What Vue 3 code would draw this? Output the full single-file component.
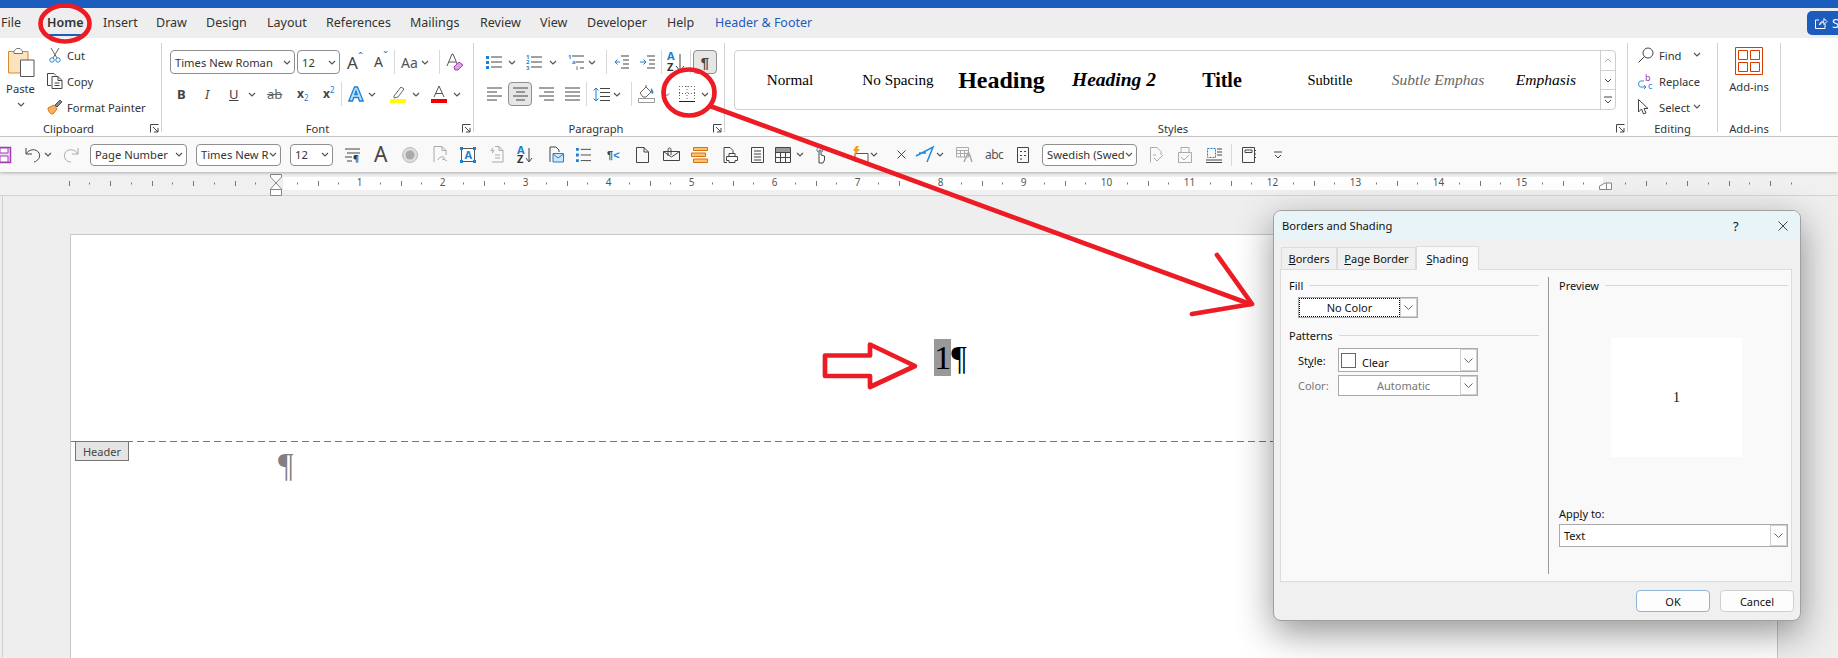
<template>
  <div class="word">
    <div class="titlebar"></div>

    <div class="tabs">
      <div class="tab-list">
        <span v-for="t in tabs" :key="t" class="tab" :class="{ on: t === 'Home', ctx: t === 'Header & Footer' }">{{ t }}</span>
      </div>
      <div class="share">
        <svg width="14" height="14" viewBox="0 0 14 14" class="w"><path d="M5 4H1.500V12.500H11V8M5.500 9C6 6 8 5 10 5V2.500L13 5.500L10 8.500V6.500C8 6.500 6.500 7 5.500 9Z"/></svg>
        <span>S</span>
      </div>
    </div>

    <div class="ribbon">
      <!-- Clipboard -->
      <section class="group g-clip">
        <div class="clip-body">
          <div class="paste">
            <svg width="28" height="31" viewBox="0 0 28 31">
              <path d="M1.500 4.500H21V26H1.500Z" fill="#fbe3bd" stroke="#d98a2b"/>
              <path d="M7 4.500C7 3 9 3 9.500 1.500H13C13.500 3 15.500 3 15.500 4.500V6.500H7Z" fill="#fff" stroke="#777"/>
              <path d="M13.500 13H27V29.500H13.500Z" fill="#fff" stroke="#555"/>
            </svg>
            <span>Paste</span>
            <svg class="chev" width="8" height="5" viewBox="0 0 8 5"><path d="M1 1L4 4L7 1"/></svg>
          </div>
          <div class="clip-list">
            <div class="clip-row">
              <svg width="16" height="16" viewBox="0 0 16 16">
                <path d="M4 1L10 11M12 1L6 11" fill="none" stroke="#666"/>
                <circle cx="5" cy="13" r="2.200" fill="none" stroke="#2b88d8"/><circle cx="11" cy="13" r="2.200" fill="none" stroke="#2b88d8"/>
              </svg>
              <span>Cut</span>
            </div>
            <div class="clip-row">
              <svg width="16" height="16" viewBox="0 0 16 16" class="k">
                <path d="M4 12.500H0.500V0.500H7L9 2.500"/><path d="M5 3.500H11L15 7.500V15.500H5ZM11 3.500V7.500H15M7.500 10H12.500M7.500 12.500H12.500"/>
              </svg>
              <span>Copy</span>
            </div>
            <div class="clip-row">
              <svg width="16" height="16" viewBox="0 0 16 16">
                <path d="M1 9L7 6L10 10L6 15C3 15 1 12 1 9Z" fill="#f7b267" stroke="#d9730d"/>
                <path d="M8 6L13 1L15 3L10 8Z" fill="#888" stroke="#555"/>
              </svg>
              <span>Format Painter</span>
            </div>
          </div>
        </div>
        <footer class="label pad-clip">Clipboard<i class="launch"><svg width="9" height="9" viewBox="0 0 9 9" class="k"><path d="M0.500 8.500V0.500H8.500M3 3L8 8M8 4V8H4"/></svg></i></footer>
      </section>

      <!-- Font -->
      <section class="group g-font">
        <div class="rows">
          <div class="row font-1">
            <span class="combo c-font">Times New Roman<svg class="chev" width="8" height="5" viewBox="0 0 8 5"><path d="M1 1L4 4L7 1"/></svg></span>
            <span class="combo c-size">12<svg class="chev" width="8" height="5" viewBox="0 0 8 5"><path d="M1 1L4 4L7 1"/></svg></span>
            <span class="bigA">A<sup class="blue">ˆ</sup></span>
            <span class="bigA small">A<sup class="blue">ˇ</sup></span>
            <i class="sep"></i>
            <span class="aa">Aa</span>
            <svg class="chev" width="8" height="5" viewBox="0 0 8 5"><path d="M1 1L4 4L7 1"/></svg>
            <i class="sep"></i>
            <svg width="18" height="18" viewBox="0 0 18 18">
              <path d="M1 13L6 1H7L12 13M3 9H10" fill="none" stroke="#555"/>
              <path d="M8 14L13 9L17 12L12 17H9Z" fill="#d9a3e3" stroke="#a23cb5"/>
            </svg>
          </div>
          <div class="row font-2">
            <b class="fx">B</b>
            <i class="fx serif-i">I</i>
            <u class="fx">U</u>
            <svg class="chev" width="8" height="5" viewBox="0 0 8 5"><path d="M1 1L4 4L7 1"/></svg>
            <s class="fx ab">ab</s>
            <span class="fx sub">x<sub>2</sub></span>
            <span class="fx sub">x<sup>2</sup></span>
            <i class="sep"></i>
            <svg width="16" height="16" viewBox="0 0 16 16">
              <path d="M0.800 15L6.500 1H9.500L15.200 15H11.500L10.300 11.500H5.700L4.500 15ZM6.800 8.500H9.200L8 5Z" fill="#bfe0f7" stroke="#1e7fd0" stroke-width="1.300"/>
            </svg>
            <svg class="chev" width="8" height="5" viewBox="0 0 8 5"><path d="M1 1L4 4L7 1"/></svg>
            <svg width="16" height="18" viewBox="0 0 16 18">
              <path d="M4 11L11 2L14 4L8 12L4 13Z" fill="none" stroke="#666"/>
              <path d="M0 14H16V18H0Z" fill="#ffff00"/>
            </svg>
            <svg class="chev" width="8" height="5" viewBox="0 0 8 5"><path d="M1 1L4 4L7 1"/></svg>
            <svg width="16" height="18" viewBox="0 0 16 18">
              <path d="M3 12L8 1L13 12M5 8.500H11" fill="none" stroke="#555"/>
              <path d="M0 14H16V18H0Z" fill="#f00000"/>
            </svg>
            <svg class="chev" width="8" height="5" viewBox="0 0 8 5"><path d="M1 1L4 4L7 1"/></svg>
          </div>
        </div>
        <footer class="label">Font<i class="launch"><svg width="9" height="9" viewBox="0 0 9 9" class="k"><path d="M0.500 8.500V0.500H8.500M3 3L8 8M8 4V8H4"/></svg></i></footer>
      </section>

      <!-- Paragraph -->
      <section class="group g-para">
        <div class="rows">
          <div class="row para-1">
            <svg width="16" height="16" viewBox="0 0 16 16" class="k"><path d="M0 2H3V5H0ZM0 7H3V10H0ZM0 12H3V15H0Z" style="fill:#1e7fd0;stroke:none"/><path d="M5 3H16M5 8H16M5 13H16"/></svg>
            <svg class="chev" width="8" height="5" viewBox="0 0 8 5"><path d="M1 1L4 4L7 1"/></svg>
            <svg width="16" height="16" viewBox="0 0 16 16" class="k"><path d="M5 3H16M5 8H16M5 13H16"/><text x="0" y="5" class="num">1</text><text x="0" y="10" class="num">2</text><text x="0" y="15.500" class="num">3</text></svg>
            <svg class="chev" width="8" height="5" viewBox="0 0 8 5"><path d="M1 1L4 4L7 1"/></svg>
            <svg width="16" height="16" viewBox="0 0 16 16" class="k"><path d="M4 2H16M8 8H16M12 14H16"/><text x="0" y="5" class="num">1</text><text x="4" y="10" class="num">a</text><text x="8" y="15.500" class="num">i</text></svg>
            <svg class="chev" width="8" height="5" viewBox="0 0 8 5"><path d="M1 1L4 4L7 1"/></svg>
            <i class="sep"></i>
            <svg width="15" height="14" viewBox="0 0 15 14" class="k"><path d="M7 1H15M9 5H15M9 9H15M7 13H15"/><path d="M6 7H1M3.500 4.500L1 7L3.500 9.500" style="stroke:#1e7fd0"/></svg>
            <svg width="15" height="14" viewBox="0 0 15 14" class="k"><path d="M7 1H15M9 5H15M9 9H15M7 13H15"/><path d="M0 7H6M3.500 4.500L6 7L3.500 9.500" style="stroke:#1e7fd0"/></svg>
            <i class="sep"></i>
            <svg width="18" height="22" viewBox="0 0 18 22">
              <text x="0" y="9" class="az blue-t">A</text><text x="0" y="20" class="az">Z</text>
              <path d="M13 3V19M9 15L13 20L17 15" fill="none" stroke="#444"/>
            </svg>
            <i class="sep"></i>
            <span class="toggle pil">¶</span>
          </div>
          <div class="row para-2">
            <svg width="15" height="14" viewBox="0 0 15 14" class="k"><path d="M0 1H15M0 5H10M0 9H15M0 13H10"/></svg>
            <span class="toggle"><svg width="15" height="14" viewBox="0 0 15 14" class="k"><path d="M0 1H15M3 5H12M0 9H15M3 13H12"/></svg></span>
            <svg width="15" height="14" viewBox="0 0 15 14" class="k"><path d="M0 1H15M5 5H15M0 9H15M5 13H15"/></svg>
            <svg width="15" height="14" viewBox="0 0 15 14" class="k"><path d="M0 1H15M0 5H15M0 9H15M0 13H15"/></svg>
            <i class="sep"></i>
            <svg width="17" height="15" viewBox="0 0 17 15" class="k"><path d="M7 1.500H17M7 5.500H17M7 9.500H17M7 13.500H17"/><path d="M3 1V14M0.500 3.500L3 1L5.500 3.500M0.500 11.500L3 14L5.500 11.500" style="stroke:#1e7fd0"/></svg>
            <svg class="chev" width="8" height="5" viewBox="0 0 8 5"><path d="M1 1L4 4L7 1"/></svg>
            <i class="sep"></i>
            <svg width="17" height="20" viewBox="0 0 17 20">
              <path d="M2 9L8 3L13 8L8 13H5ZM8 3V1" fill="none" stroke="#666"/>
              <path d="M13 4C15 6 16 8 15 10C13.500 10 12.500 8 13 4Z" fill="#2b88d8"/>
              <path d="M0.500 14.500H16.500V18.500H0.500Z" fill="#fff" stroke="#999"/>
            </svg>
            <svg class="chev" width="6" height="5" viewBox="0 0 8 5"><path d="M1 1L4 4L7 1"/></svg>
            <svg width="16" height="16" viewBox="0 0 16 16">
              <path d="M0.500 0V14M8 0V14M15.500 0V14M0 0.500H16M0 7.500H16" fill="none" stroke="#666" stroke-dasharray="1 2"/>
              <path d="M0 15.500H16" stroke="#222"/>
            </svg>
            <svg class="chev" width="8" height="5" viewBox="0 0 8 5"><path d="M1 1L4 4L7 1"/></svg>
          </div>
        </div>
        <footer class="label pad-6">Paragraph<i class="launch"><svg width="9" height="9" viewBox="0 0 9 9" class="k"><path d="M0.500 8.500V0.500H8.500M3 3L8 8M8 4V8H4"/></svg></i></footer>
      </section>

      <!-- Styles -->
      <section class="group g-styles">
        <div class="gallery">
          <div class="gallery-items">
            <span v-for="s in styles" :key="s.name" class="gal" :class="s.cls">{{ s.name }}</span>
          </div>
          <div class="gal-btns">
            <span><svg width="8" height="5" viewBox="0 0 8 5" class="k faint"><path d="M1 4L4 1L7 4"/></svg></span>
            <span><svg width="8" height="5" viewBox="0 0 8 5" class="k"><path d="M1 1L4 4L7 1"/></svg></span>
            <span><svg width="8" height="8" viewBox="0 0 8 8" class="k"><path d="M0 1H8M1 4L4 7L7 4"/></svg></span>
          </div>
        </div>
        <footer class="label pad-6">Styles<i class="launch"><svg width="9" height="9" viewBox="0 0 9 9" class="k"><path d="M0.500 8.500V0.500H8.500M3 3L8 8M8 4V8H4"/></svg></i></footer>
      </section>

      <!-- Editing -->
      <section class="group g-edit">
        <div class="edit-list">
          <div class="edit-row">
            <svg width="16" height="16" viewBox="0 0 16 16" class="k"><circle cx="10" cy="6" r="5"/><path d="M6.500 9.500L0.500 15.500"/></svg>
            <span>Find</span>
            <svg class="chev f" width="8" height="5" viewBox="0 0 8 5"><path d="M1 1L4 4L7 1"/></svg>
          </div>
          <div class="edit-row">
            <svg width="16" height="17" viewBox="0 0 16 17"><text x="7" y="8" class="rep pur">b</text><text x="10" y="16" class="rep bl">c</text><path d="M6 8H2.500C0 8 0 14 2.500 14H8M6 12L8 14L6 16" fill="none" stroke="#2b88d8"/></svg>
            <span>Replace</span>
          </div>
          <div class="edit-row">
            <svg width="11" height="16" viewBox="0 0 11 16" class="k"><path d="M0.500 0.500V13L3.500 10L5.500 15L8 14L6 9.500H10Z"/></svg>
            <span>Select</span>
            <svg class="chev f" width="8" height="5" viewBox="0 0 8 5"><path d="M1 1L4 4L7 1"/></svg>
          </div>
        </div>
        <footer class="label">Editing</footer>
      </section>

      <!-- Add-ins -->
      <section class="group g-add">
        <div class="addins">
          <svg width="28" height="28" viewBox="0 0 28 28" fill="none" stroke="#d83b01">
            <path d="M0.500 0.500H27.500V27.500H0.500Z"/>
            <path d="M3.500 3.500H12.500V12.500H3.500ZM15.500 3.500H24.500V12.500H15.500ZM3.500 15.500H12.500V24.500H3.500ZM15.500 15.500H24.500V24.500H15.500Z"/>
          </svg>
          <span>Add-ins</span>
        </div>
        <footer class="label">Add-ins</footer>
      </section>
    </div>

    <!-- Quick access -->
    <div class="qat">
      <svg width="11" height="16" viewBox="0 0 11 16"><path d="M-5 0.500H10.500V15.500H-5Z" fill="#f3d9f7" stroke="#a23cb5" stroke-width="1.500"/><path d="M0 1H8V6H0ZM0 9H8V15H0Z" fill="#fff" stroke="#a23cb5"/></svg>
      <svg width="16" height="16" viewBox="0 0 16 16" class="k"><path d="M1 1V7H7M1 7C4 2 11 1 14 6C16 10 13 14 9 15"/></svg>
      <svg class="chev" width="8" height="5" viewBox="0 0 8 5"><path d="M1 1L4 4L7 1"/></svg>
      <svg width="16" height="16" viewBox="0 0 16 16" class="k faint"><path d="M15 1V7H9M15 7C12 2 5 1 2 6C0 10 3 15 8 15"/></svg>
      <span class="combo c-qa">Page Number<svg class="chev" width="8" height="5" viewBox="0 0 8 5"><path d="M1 1L4 4L7 1"/></svg></span>
      <span class="combo c-qb">Times New R<svg class="chev" width="8" height="5" viewBox="0 0 8 5"><path d="M1 1L4 4L7 1"/></svg></span>
      <span class="combo c-qc">12<svg class="chev" width="8" height="5" viewBox="0 0 8 5"><path d="M1 1L4 4L7 1"/></svg></span>
      <svg width="16" height="16" viewBox="0 0 16 16" class="k"><path d="M1 2H16M3 6H16M1 10H8M3 14H8"/><text x="9" y="15" class="az small-t">¶</text></svg>
      <span class="qa-big">A</span>
      <svg width="16" height="16" viewBox="0 0 16 16"><circle cx="8" cy="8" r="7.500" fill="#ddd" stroke="#bbb"/><circle cx="8" cy="8" r="4.500" fill="#aaa"/></svg>
      <svg width="15" height="17" viewBox="0 0 15 17" class="k faint"><path d="M1 16V0.500H9L13 4.500V9M9 0.500V4.500H13M5 14C6 10 13 10 11 13C9 15 8 11 14 15"/></svg>
      <svg width="16" height="16" viewBox="0 0 16 16"><path d="M1.500 1.500H14.500V14.500H1.500Z" fill="#fff" stroke="#555"/><path d="M0 0H3V3H0ZM13 0H16V3H13ZM0 13H3V16H0ZM13 13H16V16H13Z" fill="#1e7fd0"/><text x="4.500" y="12" class="az blue-t">A</text></svg>
      <svg width="15" height="17" viewBox="0 0 15 17" class="k faint"><path d="M3 16H14V4.500L10 0.500H6M10 0.500V4.500H14M6 9H11M6 12H11"/><path d="M1 5L4 1V4H6L3 8V5Z" style="fill:#bbb;stroke:none"/></svg>
      <svg width="17" height="17" viewBox="0 0 17 17"><text x="0" y="8" class="az blue-t">A</text><text x="0" y="16.500" class="az">Z</text><path d="M12 2V15M9 12L12 16L15 12" fill="none" stroke="#444"/></svg>
      <svg width="15" height="17" viewBox="0 0 15 17"><path d="M1 16V1H7L10 4V6" fill="none" stroke="#444"/><path d="M4 7.500H14.500V16H4Z" fill="#cfe6f8" stroke="#1e7fd0"/><path d="M4 8L9 12L14.500 8" fill="none" stroke="#1e7fd0"/></svg>
      <svg width="15" height="15" viewBox="0 0 16 16" class="k"><path d="M0 1H3V4H0ZM0 7H3V10H0ZM0 13H3V16H0Z" style="fill:#1e7fd0;stroke:none"/><path d="M5 2.500H16M5 8.500H16M5 14.500H16"/></svg>
      <span class="pil-rtl">¶<em>&lt;</em></span>
      <svg width="13" height="16" viewBox="0 0 13 16" class="k"><path d="M0.500 15.500V0.500H8L12.500 5V15.500ZM8 0.500V5H12.500"/></svg>
      <svg width="17" height="15" viewBox="0 0 17 15" class="k"><path d="M0.500 4.500H16.500V13.500H0.500ZM0.500 4.500L8.500 10L16.500 4.500"/><path d="M5 9V2.500C5 0.500 8 0.500 8 2.500V8"/></svg>
      <svg width="17" height="16" viewBox="0 0 17 16" fill="#f8c471" stroke="#d9730d"><path d="M2.500 0.500H16.500V3.500H2.500ZM0.500 6H14.500V9.500H0.500ZM2.500 12H16.500V15.500H2.500Z"/></svg>
      <svg width="16" height="16" viewBox="0 0 16 16" class="k"><path d="M2 15.500V0.500H8L11 3.500V6M2 15.500H5"/><path d="M4.500 9.500H15.500V13.500H13V15.500H7V13.500H4.500ZM7 6.500H13V9.500H7Z"/></svg>
      <svg width="13" height="16" viewBox="0 0 13 16" class="k"><path d="M0.500 0.500H12.500V15.500H0.500ZM3 4H10M3 7H10M3 10H10M3 13H10"/></svg>
      <svg width="16" height="16" viewBox="0 0 16 16" class="k"><path d="M0.500 0.500H15.500V15.500H0.500ZM0.500 5.500H15.500M0.500 10.500H15.500M5.500 5.500V15.500M10.500 5.500V15.500"/><path d="M1 1H15V5H1Z" style="fill:#999;stroke:none"/></svg>
      <svg class="chev" width="8" height="5" viewBox="0 0 8 5"><path d="M1 1L4 4L7 1"/></svg>
      <svg width="12" height="18" viewBox="0 0 12 18"><path d="M4 6C1 3 5 -1 8 2C9 3 9 5 8 6" fill="none" stroke="#2b88d8"/><path d="M5 14V5C5 3.500 7 3.500 7 5V9L10.500 10V14L9 17H5Z" fill="#fff" stroke="#444"/></svg>
      <svg width="20" height="17" viewBox="0 0 20 17"><path d="M5 7.500H18V15.500H5Z" fill="#fff" stroke="#555"/><path d="M3 5L6 0H9L7 3H10L4 10L5 5Z" fill="#f59b1b"/></svg>
      <svg class="chev" width="8" height="5" viewBox="0 0 8 5"><path d="M1 1L4 4L7 1"/></svg>
      <svg width="9" height="9" viewBox="0 0 9 9" class="k"><path d="M0.500 0.500L8.500 8.500M8.500 0.500L0.500 8.500"/></svg>
      <svg width="20" height="17" viewBox="0 0 20 17" fill="none" stroke="#1e8ae0" stroke-width="1.500"><path d="M1 10L18 1L12 16M11 7H4"/></svg>
      <svg class="chev" width="8" height="5" viewBox="0 0 8 5"><path d="M1 1L4 4L7 1"/></svg>
      <svg width="16" height="16" viewBox="0 0 16 16" class="k faint"><path d="M0.500 0.500H12.500V10H0.500ZM0.500 3.500H12.500M0.500 6.500H12.500M4.500 3.500V10M8.500 3.500V10"/><path d="M8 15L12 6H13L16 15" stroke-width="1.500"/></svg>
      <span class="abc">abc</span>
      <svg width="12" height="16" viewBox="0 0 12 16" class="k"><path d="M0.500 0.500H11.500V15.500H0.500ZM3 4.500H5M3 8.500H5M3 12H5M7 4.500H9M7 8.500H9"/></svg>
      <span class="combo c-qd">Swedish (Swed<svg class="chev" width="8" height="5" viewBox="0 0 8 5"><path d="M1 1L4 4L7 1"/></svg></span>
      <svg width="14" height="16" viewBox="0 0 14 16" class="k faint"><path d="M0.500 15.500V0.500H7L11 4.500V8M3 8H6M4 11L7 14L13 8"/></svg>
      <svg width="14" height="16" viewBox="0 0 14 16" class="k faint"><path d="M0.500 5.500H13.500V15.500H0.500ZM3 5.500V0.500H11V5.500M3 10L6 13L11 8"/></svg>
      <svg width="16" height="16" viewBox="0 0 16 16" class="k"><path d="M0 13H16M0 15.500H16M11 2H16M11 5H16M11 8H16"/><path d="M1.500 1.500H9.500V10.500H1.500Z" style="stroke:#1e7fd0" stroke-dasharray="2 1"/></svg>
      <i class="sep"></i>
      <svg width="14" height="16" viewBox="0 0 14 16" class="k"><path d="M0.500 0.500H12.500V15.500H0.500ZM3 3H10V5.500H3ZM12.500 3.500H14M12.500 7H14M12.500 10.500H14"/></svg>
      <svg width="8" height="8" viewBox="0 0 8 8" class="k"><path d="M0 1H8M1 4L4 7L7 4"/></svg>
    </div>

    <!-- Ruler -->
    <div class="ruler">
      <svg class="ruler-svg" width="1838" height="22" viewBox="0 0 1838 22">
        <rect x="283" y="3" width="1320" height="13" fill="#fff"/>
        <template v-for="t in rulerTicks" :key="t.x">
          <text v-if="t.label" :x="t.x" y="12" text-anchor="middle" class="rnum">{{ t.label }}</text>
          <line v-else :x1="t.x" :x2="t.x" :y1="t.long ? 7 : 8.500" :y2="t.long ? 12 : 10.500" stroke="#777"/>
        </template>
        <path d="M270.500 0.500H281.500V3L276 9L270.500 3ZM276 9L281.500 15V21.500H270.500V15ZM270.500 15.500H281.500" fill="#fff" stroke="#888"/>
        <path d="M1599.500 15.500V12L1605 9H1611.500V15.500ZM1606.500 9V15.500" fill="#fff" stroke="#888"/>
      </svg>
    </div>

    <!-- Document -->
    <div class="workspace">
      <div class="page">
        <div class="header-zone">
          <p class="header-par"><mark>1</mark>¶</p>
        </div>
        <div class="header-line"></div>
        <div class="body-row">
          <span class="header-tag">Header</span>
          <span class="body-pil">¶</span>
        </div>
      </div>
    </div>

    <!-- Borders and Shading dialog -->
    <div class="dialog">
      <div class="dlg-title">
        <span>Borders and Shading</span>
        <span class="dlg-help">?</span>
        <svg width="10" height="10" viewBox="0 0 10 10" class="k"><path d="M0.500 0.500L9.500 9.500M9.500 0.500L0.500 9.500"/></svg>
      </div>
      <div class="dlg-tabs">
        <span class="dlg-tab t1"><u>B</u>orders</span>
        <span class="dlg-tab t2"><u>P</u>age Border</span>
        <span class="dlg-tab t3 active"><u>S</u>hading</span>
      </div>
      <div class="dlg-panel">
        <div class="dlg-left">
          <div class="legend"><span>Fill</span><i></i></div>
          <div class="fill-combo">
            <span class="fill-value">No Color</span>
            <span class="drop"><svg width="9" height="5" viewBox="0 0 9 5"><path d="M0.500 0.500L4.500 4.500L8.500 0.500"/></svg></span>
          </div>
          <div class="legend patterns"><span>Patterns</span><i></i></div>
          <div class="field style-field">
            <label>St<u>y</u>le:</label>
            <div class="select tall">
              <span class="swatch"></span><span class="clear">Clear</span>
              <span class="drop"><svg width="9" height="5" viewBox="0 0 9 5"><path d="M0.500 0.500L4.500 4.500L8.500 0.500"/></svg></span>
            </div>
          </div>
          <div class="field color-field">
            <label class="off">Color:</label>
            <div class="select">
              <span class="auto">Automatic</span>
              <span class="drop"><svg width="9" height="5" viewBox="0 0 9 5"><path d="M0.500 0.500L4.500 4.500L8.500 0.500"/></svg></span>
            </div>
          </div>
        </div>
        <div class="dlg-right">
          <div class="legend"><span>Preview</span><i></i></div>
          <div class="preview"><span>1</span></div>
          <div class="apply">
            <label>App<u>l</u>y to:</label>
            <div class="select apply-select">
              <span class="apply-val">Text</span>
              <span class="drop"><svg width="9" height="5" viewBox="0 0 9 5"><path d="M0.500 0.500L4.500 4.500L8.500 0.500"/></svg></span>
            </div>
          </div>
        </div>
      </div>
      <div class="dlg-foot">
        <button class="ok">OK</button>
        <button>Cancel</button>
      </div>
    </div>

    <!-- Red annotations drawn on top of the screenshot -->
    <svg class="marks" width="1838" height="658" viewBox="0 0 1838 658" fill="none" stroke="#ed1c24" stroke-width="4.700" stroke-linecap="round" stroke-linejoin="round">
      <ellipse cx="65" cy="23.500" rx="24.500" ry="18"/>
      <ellipse cx="689" cy="92.500" rx="25.500" ry="23"/>
      <path d="M710 106L1250 304"/>
      <path d="M1217 255L1252 304L1192 314"/>
      <path d="M825 355.500H870V344.500L915 366L870 387V376H825Z"/>
    </svg>
  </div>
</template>

<script setup>
import { computed } from 'vue'

const tabs = ['File', 'Home', 'Insert', 'Draw', 'Design', 'Layout', 'References', 'Mailings', 'Review', 'View', 'Developer', 'Help', 'Header & Footer']

const styles = [
  { name: 'Normal', cls: 's-normal' },
  { name: 'No Spacing', cls: 's-normal' },
  { name: 'Heading', cls: 's-h1' },
  { name: 'Heading 2', cls: 's-h2' },
  { name: 'Title', cls: 's-title' },
  { name: 'Subtitle', cls: 's-sub' },
  { name: 'Subtle Emphas', cls: 's-subtle' },
  { name: 'Emphasis', cls: 's-emph' }
]

// quarter marks, one number per 83px
const rulerTicks = computed(() => {
  const out = []
  for (let i = -10; i <= 73; i++) {
    if (i === 64) continue
    const x = Math.round(276 + 20.75 * i) + 0.5
    const isWhole = i % 4 === 0
    out.push({ x, long: i % 2 === 0, label: isWhole && i > 0 && i <= 60 ? String(i / 4) : '' })
  }
  return out
})
</script>

<style>
html, body { margin: 0; background: #eeeeee; }
</style>

<style scoped>
.word {
  position: relative;
  width: 1838px;
  height: 658px;
  overflow: hidden;
  background: #eeeeee;
  font-family: "Noto Sans", "Open Sans", sans-serif;
  font-size: 11.200px;
  color: #333;
}
svg { display: block; flex: none; overflow: visible; }
.k path, .k circle, .k line { fill: none; stroke: #444; }
.faint path { stroke: #aaa; }
.w path { fill: none; stroke: #fff; }
.chev path { fill: none; stroke: #555; stroke-width: 1.200; }
i { font-style: normal; }

.titlebar { height: 8px; background: #1b5cbd; }

.tabs { height: 30px; display: flex; background: #eeeeee; }
.tab-list {
  display: grid;
  grid-template-columns: 46px 56px 53px 50px 61px 59px 84px 70px 60px 47px 80px 48px auto;
  padding-left: 1px;
  align-items: center;
  height: 29px;
  font-size: 12.500px;
}
.tab { position: relative; white-space: nowrap; }
.tab.on { font-weight: 600; }
.tab.on::after {
  content: "";
  position: absolute;
  left: 0;
  width: 36px;
  bottom: -5px;
  height: 2px;
  background: #1b5cbd;
}
.tab.ctx { color: #1b5cbd; }
.share {
  margin: 3px 0 0 auto;
  width: 31px;
  height: 24px;
  box-sizing: border-box;
  padding-left: 7px;
  background: #1b5cbd;
  border-radius: 5px 0 0 5px;
  color: #fff;
  display: flex;
  align-items: center;
  gap: 4px;
  font-size: 13px;
}

.ribbon {
  height: 99px;
  box-sizing: border-box;
  background: #fff;
  border-bottom: 1px solid #cfcfcf;
  padding: 5px 0 5px;
  display: flex;
}
.group {
  position: relative;
  display: flex;
  flex-direction: column;
  box-sizing: border-box;
  border-right: 1px solid #d0d0d0;
  height: 89px;
}
.g-clip { width: 162px; }
.g-font { width: 312px; }
.g-para { width: 251px; }
.g-styles { width: 903px; }
.g-edit { width: 90px; }
.g-add { width: 63px; }

.label {
  margin-top: auto;
  margin-bottom: -3px;
  height: 14px;
  flex: none;
  display: flex;
  align-items: center;
  justify-content: center;
  text-align: center;
}
.launch { position: absolute; right: 2px; bottom: -1px; }
.pad-clip { padding-right: 24px; }
.pad-6 { padding-right: 6px; }

.clip-body { display: flex; }
.paste {
  width: 41px;
  padding-top: 4px;
  display: flex;
  flex-direction: column;
  align-items: center;
  box-sizing: border-box;
}
.paste span { margin-top: 3px; }
.paste .chev { margin-top: 6px; }
.clip-list { padding-left: 6px; margin-top: -1px; }
.clip-row { height: 26px; display: flex; align-items: center; gap: 4px; white-space: nowrap; }

.rows { display: flex; flex-direction: column; gap: 8px; padding-top: 7px; }
.row { height: 24px; display: grid; align-items: center; justify-items: start; }
.font-1 {
  padding-left: 8px;
  grid-template-columns: 127px 50px 27px 20px 7px 20px 18px 7px auto;
}
.font-2 {
  padding-left: 15px;
  grid-template-columns: 28px 24px 19px 19px 30px 26px 18px 7px 20px 22px 22px 19px 22px auto;
}
.para-1 {
  padding-left: 12px;
  grid-template-columns: 22px 18px 23px 19px 20px 18px 8px 26px 21px 6px 23px 3px auto;
}
.para-2 {
  padding-left: 13px;
  grid-template-columns: 21px 31px 26px 21px 7px 20px 18px 7px 26px 15px 22px auto;
}
.sep { display: block; width: 1px; height: 24px; background: #d8d8d8; }

.combo {
  box-sizing: border-box;
  height: 24px;
  display: flex;
  align-items: center;
  justify-content: space-between;
  padding: 0 3px 0 4px;
  border: 1px solid #8f8f8f;
  border-radius: 4px;
  background: #fff;
  white-space: nowrap;
  overflow: hidden;
}
.c-font { width: 125px; }
.c-size { width: 43px; }
.bigA { font-size: 17px; color: #444; line-height: 1; }
.bigA.small { font-size: 14px; }
.blue { color: #1e7fd0; font-size: 12px; line-height: 0; }
.aa { font-size: 14px; color: #555; }
.fx { font-size: 13px; color: #444; line-height: 1; }
.serif-i { font-style: italic; }
.ab { color: #666; }
.sub { font-weight: 700; font-size: 12px; }
.sub sub, .sub sup { color: #1e7fd0; font-size: 8px; font-weight: 400; line-height: 0; }

.toggle {
  box-sizing: border-box;
  width: 24px;
  height: 24px;
  display: flex;
  align-items: center;
  justify-content: center;
  border: 1px solid #8f8f8f;
  border-radius: 4px;
  background: #e6e6e6;
}
.pil { font-family: "Liberation Sans", sans-serif; font-size: 15px; font-weight: 700; color: #444; }
.num { font-size: 6px; fill: #1e7fd0; stroke: none; font-weight: 700; }
.az { font-size: 11px; fill: #333; stroke: none; font-weight: 700; }
.blue-t { fill: #1e7fd0; }
.small-t { font-size: 9px; }

.gallery {
  margin: 7px 0 0 9px;
  width: 882px;
  height: 60px;
  box-sizing: border-box;
  border: 1px solid #cfcfcf;
  border-radius: 4px;
  display: flex;
  background: #fff;
}
.gallery-items {
  flex: 1;
  display: grid;
  grid-template-columns: repeat(8, 108px);
  padding-left: 1px;
  align-items: center;
  justify-items: center;
  font-family: "Liberation Serif", serif;
  color: #000;
}
.gal { white-space: nowrap; }
.s-normal { font-size: 15.200px; }
.s-h1 { font-size: 24px; font-weight: 700; margin-right: 9px; }
.s-h2 { font-size: 19.500px; font-weight: 700; font-style: italic; }
.s-title { font-size: 20px; font-weight: 700; }
.s-sub { font-size: 14.500px; }
.s-subtle { font-size: 15.500px; font-style: italic; color: #666; }
.s-emph { font-size: 15.500px; font-style: italic; }
.gal-btns {
  width: 14px;
  border-left: 1px solid #cfcfcf;
  display: flex;
  flex-direction: column;
}
.gal-btns span {
  flex: 1;
  display: flex;
  align-items: center;
  justify-content: center;
}
.gal-btns span + span { border-top: 1px solid #cfcfcf; }

.edit-list { padding: 0 0 0 10px; margin-top: -1px; }
.edit-row {
  position: relative;
  height: 26px;
  display: grid;
  grid-template-columns: 21px auto;
  align-items: center;
  justify-items: start;
  white-space: nowrap;
}
.chev.f { position: absolute; left: 55px; top: 10px; }
.rep { font-size: 9px; stroke: none; }
.pur { fill: #a23cb5; }
.bl { fill: #2b88d8; }

.addins { display: flex; flex-direction: column; align-items: center; padding-top: 4px; gap: 4px; }

.qat {
  height: 35px;
  background: #f9f9f9;
  box-shadow: 0 1px 3px rgba(0, 0, 0, 0.28);
  position: relative;
  display: grid;
  grid-template-columns: 25px 19px 19px 27px 106px 94px 54px 30px 28px 31px 27px 29px 28px 32px 27px 31px 29px 27px 28px 31px 29px 24px 21px 18px 36px 20px 27px 18px 21px 20px 29px 32px 25px 108px 28px 28px 25px 11px 32px auto;
  align-items: center;
  justify-items: start;
}
.c-qa { width: 97px; height: 22px; }
.c-qb { width: 85px; height: 22px; }
.c-qc { width: 43px; height: 22px; }
.c-qd { width: 95px; height: 22px; }
.qa-big { font-size: 21px; line-height: 1; color: #444; }
.pil-rtl { font-family: "Liberation Sans", sans-serif; font-size: 11px; font-weight: 700; color: #444; }
.pil-rtl em { color: #1e7fd0; font-style: normal; }
.abc { font-size: 12px; letter-spacing: -0.5px; color: #555; }
.qat .sep { height: 22px; }

.ruler {
  height: 24px;
  box-sizing: border-box;
  padding-top: 2px;
  background: #f0f0f0;
  border-bottom: 1px solid #d4d4d4;
}
.rnum { font-size: 10px; fill: #555; }

.workspace {
  height: 461px;
  box-sizing: border-box;
  padding: 38px 60px 0 70px;
  background: #eeeeee;
  position: relative;
}
.workspace::before {
  content: "";
  position: absolute;
  left: 2px;
  top: 0;
  bottom: 0;
  width: 1px;
  background: #cfcfcf;
}
.page {
  height: 424px;
  box-sizing: border-box;
  background: #fff;
  border: 1px solid #c8c8c8;
  border-bottom: 0;
}
.header-zone { height: 206px; display: flex; justify-content: center; padding-top: 103px; box-sizing: border-box; }
.header-par {
  margin: 0 0 0 53px;
  height: 40px;
  font-family: "Liberation Serif", serif;
  font-size: 34px;
  line-height: 40px;
  color: #000;
}
.header-par mark { background: #999; color: #000; }
.header-line {
  height: 1px;
  background: repeating-linear-gradient(90deg, #777 0 7px, transparent 7px 11px);
}
.body-row { display: flex; align-items: flex-start; }
.header-tag {
  box-sizing: border-box;
  margin-left: 4px;
  width: 54px;
  height: 20px;
  margin-top: -1px;
  background: #e4e4e4;
  border: 1px solid #777;
  font-size: 11px;
  color: #444;
  display: flex;
  align-items: center;
  justify-content: center;
}
.body-pil {
  margin: 3px 0 0 149px;
  font-family: "Liberation Serif", serif;
  font-size: 34px;
  line-height: 40px;
  color: #808080;
}

.dialog {
  position: absolute;
  left: 1273px;
  top: 210px;
  width: 528px;
  height: 411px;
  box-sizing: border-box;
  background: #f0f0f0;
  border: 1px solid #a0a0a0;
  border-radius: 8px;
  box-shadow: 0 12px 36px rgba(0, 0, 0, 0.42);
  overflow: hidden;
  color: #111;
  font-size: 11px;
  display: flex;
  flex-direction: column;
}
.dlg-title {
  height: 29px;
  flex: none;
  background: #e9f4f8;
  display: grid;
  grid-template-columns: 451px 45px auto;
  align-items: center;
  padding-left: 8px;
  font-size: 11.200px;
}
.dlg-help { font-size: 13px; }
.dlg-tabs {
  display: flex;
  height: 29px;
  flex: none;
  padding-left: 7px;
  align-items: flex-end;
}
.dlg-tab {
  box-sizing: border-box;
  height: 22px;
  display: flex;
  align-items: center;
  justify-content: center;
  background: #f0f0f0;
  border: 1px solid #dcdcdc;
  border-bottom: 0;
  white-space: pre;
}
.dlg-tab u { text-decoration-thickness: 1px; }
.t1 { width: 56px; }
.t2 { width: 79px; }
.t3 { width: 63px; }
.dlg-tab.active {
  height: 24px;
  background: #f9f9f9;
  position: relative;
  top: 1px;
}
.dlg-panel {
  margin: 0 8px 0 6px;
  flex: none;
  height: 313px;
  box-sizing: border-box;
  background: #f9f9f9;
  border: 1px solid #dcdcdc;
  display: grid;
  grid-template-columns: 267px 1fr;
  padding-top: 7px;
}
.dlg-left { padding-left: 8px; height: 297px; }
.dlg-right { border-left: 1px solid #999; height: 297px; padding-left: 10px; box-sizing: border-box; padding-right: 5px; display: flex; flex-direction: column; }
.legend { display: flex; align-items: center; gap: 6px; height: 16px; }
.legend i { flex: 1; height: 1px; background: #d8d8d8; margin-right: 9px; }
.dlg-right .legend i { margin-right: 0; }
.fill-combo {
  margin: 4px 0 0 9px;
  width: 120px;
  height: 21px;
  box-sizing: border-box;
  border: 1px solid #aaa;
  background: #fff;
  display: flex;
}
.fill-value {
  flex: 1;
  outline: 1px dotted #000;
  outline-offset: -1px;
  display: flex;
  align-items: center;
  justify-content: center;
}
.drop {
  width: 17px;
  flex: none;
  box-sizing: border-box;
  border: 1px solid #d0d0d0;
  background: #fdfdfd;
  display: flex;
  align-items: center;
  justify-content: center;
}
.drop path { fill: none; stroke: #666; }
.patterns { margin-top: 9px; }
.field { display: grid; grid-template-columns: 40px 140px; margin-left: 9px; align-items: center; }
.style-field { margin-top: 5px; }
.color-field { margin-top: 3px; }
.off { color: #777; }
.select {
  box-sizing: border-box;
  height: 21px;
  border: 1px solid #aaa;
  background: #fff;
  display: flex;
  align-items: center;
}
.select.tall { height: 24px; }
.swatch { width: 15px; height: 15px; box-sizing: border-box; border: 1px solid #666; margin-left: 2px; }
.clear { flex: 1; padding: 5px 0 0 6px; }
.select .drop { align-self: stretch; }
.auto { flex: 1; text-align: center; color: #777; padding-left: 8px; }
.preview {
  margin: 45px 0 0 52px;
  width: 131px;
  height: 119px;
  background: #fff;
  display: flex;
  align-items: center;
  justify-content: center;
  font-family: "Liberation Serif", serif;
  font-size: 14px;
}
.apply { margin-top: 49px; }
.apply label { display: block; height: 18px; }
.apply-select { height: 23px; width: 229px; }
.apply-val { flex: 1; padding-left: 4px; }
.dlg-foot {
  flex: 1;
  display: flex;
  justify-content: flex-end;
  gap: 10px;
  align-items: center;
  padding-right: 6px;
}
.dlg-foot button {
  width: 74px;
  height: 22px;
  box-sizing: border-box;
  font: inherit;
  color: #111;
  background: #fdfdfd;
  border: 1px solid #cfcfcf;
  border-radius: 4px;
  padding: 0;
}
.dlg-foot .ok { border-color: #8fb4d8; }

.marks { position: absolute; left: 0; top: 0; pointer-events: none; }
</style>
